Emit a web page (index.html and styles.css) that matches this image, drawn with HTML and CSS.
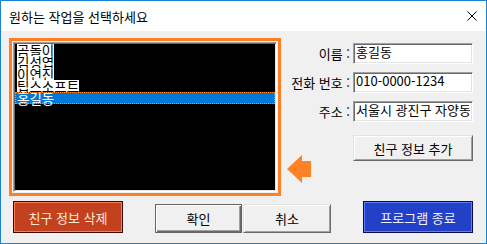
FILE: index.html
```html
<!DOCTYPE html>
<html lang="ko">
<head>
    <meta charset="UTF-8">
    <title>원하는 작업을 선택하세요</title>
    <link rel="stylesheet" href="styles.css">
</head>
<body>
    <div class="window">
        <div class="titlebar">
            <span class="title">원하는 작업을 선택하세요</span>
            <svg class="close" width="10" height="10" viewBox="0 0 10 10">
                <path d="M0.5 0.5 L9.5 9.5 M9.5 0.5 L0.5 9.5" stroke="#000" stroke-width="1" fill="none"/>
            </svg>
        </div>
        <div class="content">
            <div class="top">
                <div class="list-frame">
                    <div class="listbox">
                        <div class="item"><span>곰돌이</span></div>
                        <div class="item"><span>김성엽</span></div>
                        <div class="item"><span>이연진</span></div>
                        <div class="item"><span>팁스소프트</span></div>
                        <div class="item selected"><span>홍길동</span></div>
                    </div>
                </div>
                <div class="side">
                    <div class="form">
                        <label for="name">이름 :</label>
                        <input type="text" id="name" value="홍길동">
                        <label for="phone">전화 번호 :</label>
                        <input type="text" id="phone" value="010-0000-1234">
                        <label for="addr">주소 :</label>
                        <input type="text" id="addr" value="서울시 광진구 자양동">
                    </div>
                    <div class="add-row">
                        <svg class="arrow" width="24" height="28" viewBox="0 0 24 28">
                            <polygon points="0,14 15,0 15,6 24,6 24,22 15,22 15,28" fill="#ff8126"/>
                        </svg>
                        <button type="button" class="btn add">친구 정보 추가</button>
                    </div>
                </div>
            </div>
            <div class="bottom">
                <button type="button" class="btn delete">친구 정보 삭제</button>
                <button type="button" class="btn ok">확인</button>
                <button type="button" class="btn cancel">취소</button>
                <button type="button" class="btn exit">프로그램 종료</button>
            </div>
        </div>
    </div>
</body>
</html>
```

FILE: styles.css
```css
html, body {
    margin: 0;
    padding: 0;
}
body {
    font-family: "Noto Sans CJK KR", "Liberation Sans", sans-serif;
    font-size: 13px;
    color: #000;
}
.window {
    width: 487px;
    height: 244px;
    box-sizing: border-box;
    border: 1px solid #1883d7;
    background-color: #f0f0f0;
}
.titlebar {
    height: 30px;
    background-color: white;
    display: flex;
    align-items: center;
    justify-content: space-between;
    padding: 0 9px 0 8px;
}
.title {
    font-size: 13px;
    line-height: 15px;
}
.close {
    display: block;
}
.content {
    padding: 7px 13px 0 8px;
}
.top {
    display: flex;
    height: 158px;
}
.list-frame {
    width: 272px;
    height: 158px;
    box-sizing: border-box;
    border: 3px solid #ff7f27;
    padding: 1px;
    background-color: #f0f0f0;
}
.listbox {
    height: 100%;
    box-sizing: border-box;
    background-color: #000;
    border: 1px solid;
    border-color: #a0a0a0 #fff #fff #a0a0a0;
    box-shadow: inset 1px 1px #696969, inset -1px -1px #e3e3e3;
    padding: 1px 1px 0 1px;
    overflow: hidden;
}
.item {
    height: 12px;
    padding-left: 2px;
}
.item span {
    display: inline-block;
    vertical-align: top;
    height: 12px;
    line-height: 12px;
    background-color: white;
    color: #000;
    font-size: 13.5px;
}
.item.selected {
    background-color: #0078d7;
    outline: 1px dotted #ff8a2a;
    outline-offset: -1px;
}
.item.selected span {
    background-color: transparent;
    color: white;
}
.side {
    flex: 1;
}
.form {
    display: grid;
    grid-template-columns: 1fr 120px;
    column-gap: 3px;
    row-gap: 8px;
    margin-top: 5px;
}
.form label {
    text-align: right;
    line-height: 21px;
    white-space: nowrap;
}
.form input {
    height: 21px;
    box-sizing: border-box;
    margin: 0;
    padding: 0 2px 4px 2px;
    font-family: "Noto Sans CJK KR", "Liberation Sans", sans-serif;
    font-size: 13px;
    color: #000;
    background-color: white;
    border: 1px solid;
    border-color: #a0a0a0 #fff #fff #a0a0a0;
    box-shadow: inset 1px 1px #696969, inset -1px -1px #e3e3e3;
    outline: none;
}
.add-row {
    display: flex;
    justify-content: space-between;
    align-items: flex-start;
    margin-top: 13px;
}
.arrow {
    display: block;
    margin-left: 6px;
    margin-top: 20px;
}
.btn {
    font-family: "Noto Sans CJK KR", "Liberation Sans", sans-serif;
    font-size: 13px;
    margin: 0;
    padding: 0;
    cursor: pointer;
    box-sizing: border-box;
    background-color: #f0f0f0;
    color: #000;
    border: 1px solid;
    border-color: #e3e3e3 #696969 #696969 #e3e3e3;
    box-shadow: inset 1px 1px #fff, inset -1px -1px #a0a0a0;
}
.add {
    width: 120px;
    height: 26px;
}
.bottom {
    display: flex;
    align-items: flex-start;
    margin-top: 5px;
}
.delete {
    width: 110px;
    height: 32px;
    margin-left: 4px;
    background-color: #c3411f;
    color: #ffe9d2;
    border-color: #3c0808;
    box-shadow: inset 1px 1px #ff7a52, inset -1px -1px #ff7a52;
}
.ok {
    width: 87px;
    height: 29px;
    margin-top: 3px;
    margin-left: 32px;
    border-color: #646464;
    box-shadow: inset 1px 1px #fff, inset -1px -1px #696969, inset -2px -2px #a0a0a0;
}
.cancel {
    width: 88px;
    height: 29px;
    margin-top: 3px;
    margin-left: 1px;
}
.exit {
    width: 110px;
    height: 32px;
    margin-left: 32px;
    background-color: #2341c6;
    color: #eef2ff;
    border-color: #0a0a4a;
    box-shadow: inset 1px 1px #5d7cff, inset -1px -1px #5d7cff;
}
```
